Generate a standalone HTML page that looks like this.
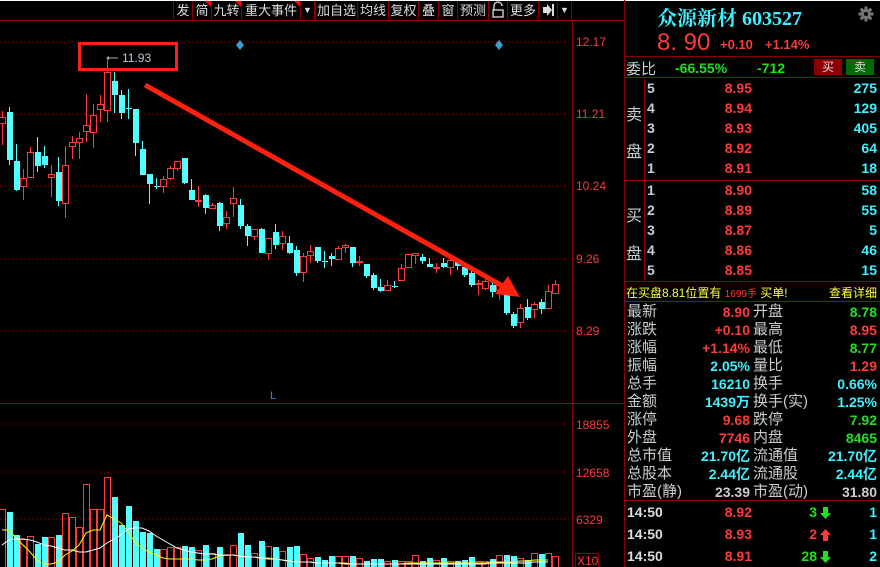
<!DOCTYPE html>
<html><head><meta charset="utf-8">
<style>
*{margin:0;padding:0;box-sizing:border-box}
body{width:880px;height:567px;background:#000;overflow:hidden;position:relative;font-family:"Liberation Sans","Noto Sans CJK SC",sans-serif;color:#ddd}
.a{position:absolute;white-space:nowrap}
.tb{position:absolute;top:1px;height:20px;border-left:1px solid #8a0000;color:#ddd;font-size:13px;line-height:19px;text-align:center;overflow:hidden}
.tri{position:absolute;right:0;top:0;width:0;height:0;border-top:6px solid #f00;border-left:6px solid transparent}
.r{color:#ff3a3a}.c{color:#3ff0ff}.g{color:#20e020}.w{color:#ccc}.y{color:#ffff40}
.num{font-weight:bold;font-size:14px}
.st{font-size:15px;line-height:18px}
</style></head><body>
<div class="a" style="left:0;top:0;width:880px;height:1px;background:#fff"></div>
<div class="tb" style="left:173px;width:19px">发</div>
<div class="tb" style="left:192px;width:19px">简<span class="tri"></span></div>
<div class="tb" style="left:211px;width:30px">九转<span class="tri"></span></div>
<div class="tb" style="left:241px;width:59px">重大事件<span class="tri"></span></div>
<div class="tb" style="left:300px;width:15px;border-right:1px solid #8a0000;font-size:9px">▼</div>
<div class="tb" style="left:315px;width:42px">加自选</div>
<div class="tb" style="left:357px;width:31px">均线</div>
<div class="tb" style="left:388px;width:30px">复权</div>
<div class="tb" style="left:418px;width:20px">叠</div>
<div class="tb" style="left:438px;width:19px">窗</div>
<div class="tb" style="left:457px;width:31px">预测</div>
<div class="tb" style="left:488px;width:19px">
<svg width="16" height="18" viewBox="0 0 16 18"><path d="M4 9V5a4 4 0 0 1 8 0" fill="none" stroke="#ddd" stroke-width="1.3"/><rect x="3" y="9" width="10" height="7" fill="none" stroke="#ddd" stroke-width="1.3"/></svg></div>
<div class="tb" style="left:507px;width:31px">更多</div>
<div class="tb" style="left:538px;width:19px"><svg width="14" height="18" viewBox="0 0 14 18"><path d="M2 6h4V3l5 6-5 6v-3H2z" fill="#ddd"/><rect x="11" y="3" width="2" height="12" fill="#ddd"/></svg></div>
<div class="tb" style="left:557px;width:15px;border-right:1px solid #8a0000;font-size:9px">▼</div>
<div class="a" style="left:0;top:20px;width:625px;height:1px;background:#8a0000"></div>

<svg class="a" style="left:0;top:0" width="625" height="567">
<g stroke="#9a0000" stroke-dasharray="1,3" stroke-width="1">
<line x1="0" y1="42" x2="572" y2="42"/><line x1="0" y1="114" x2="572" y2="114"/>
<line x1="0" y1="186" x2="572" y2="186"/><line x1="0" y1="259" x2="572" y2="259"/>
<line x1="0" y1="331" x2="572" y2="331"/>
<line x1="0" y1="424" x2="572" y2="424"/><line x1="0" y1="472" x2="572" y2="472"/>
<line x1="0" y1="519" x2="572" y2="519"/>
</g>
<line x1="572.5" y1="20" x2="572.5" y2="567" stroke="#8a0000"/>
<line x1="0" y1="403.5" x2="625" y2="403.5" stroke="#8a0000"/>
<line x1="624.5" y1="0" x2="624.5" y2="567" stroke="#8a0000"/>
<g fill="#ff3a3a" font-size="12" font-family="Liberation Sans,sans-serif">
<text x="576" y="46">12.17</text><text x="576" y="118">11.21</text><text x="576" y="190">10.24</text>
<text x="576" y="263">9.26</text><text x="576" y="335">8.29</text>
<text x="576" y="429">18855</text><text x="576" y="477">12658</text><text x="576" y="524">6329</text>
</g>
<rect x="575.5" y="553.5" width="23" height="14" fill="none" stroke="#8a0000"/>
<text x="577" y="565" fill="#ff3a3a" font-size="12" font-family="Liberation Sans,sans-serif">X10</text>
<g id="cd"></g>
<g id="vol"></g>
<polyline id="ma1" fill="none" stroke="#ffff00" stroke-width="1"/>
<polyline id="ma2" fill="none" stroke="#ffffff" stroke-width="1"/>
<path d="M240 40l4 5-4 5-4-5z" fill="#3a9ed0"/>
<path d="M499 40l4 5-4 5-4-5z" fill="#3a9ed0"/>
<text x="270" y="399" fill="#3a7fff" font-size="11" font-family="Liberation Sans,sans-serif">L</text>
<rect x="79.5" y="43.5" width="97" height="26" fill="none" stroke="#ff2010" stroke-width="3"/>
<line x1="108" y1="58" x2="118" y2="58" stroke="#aaa"/><path d="M106 58l3-2v4z" fill="#aaa"/>
<text x="122" y="62" fill="#b8c8d8" font-size="12" font-family="Liberation Sans,sans-serif">11.93</text>
<line x1="145" y1="85" x2="508" y2="289" stroke="#ff2010" stroke-width="5"/>
<path d="M520 297L495 294L508 276Z" fill="#ff2010"/>
</svg>

<div class="a c" style="left:657px;top:2px;font-size:20px;font-weight:bold;font-family:'Liberation Serif','Noto Serif CJK SC',serif">众源新材 603527</div>
<svg class="a" style="left:858px;top:6px" width="16" height="16" viewBox="0 0 16 16"><g fill="#777"><circle cx="8" cy="8" r="5"/><rect x="6.5" y="0.5" width="3" height="15"/><rect x="0.5" y="6.5" width="15" height="3"/><rect x="6.5" y="0.5" width="3" height="15" transform="rotate(45 8 8)"/><rect x="6.5" y="0.5" width="3" height="15" transform="rotate(-45 8 8)"/></g><circle cx="8" cy="8" r="2" fill="#000"/></svg>
<div class="a r" style="left:657px;top:29px;font-size:24px;font-family:'Liberation Sans',sans-serif">8. 90</div>
<div class="a r num" style="left:720px;top:37px;font-size:13px">+0.10</div>
<div class="a r num" style="left:765px;top:37px;font-size:13px">+1.14%</div>
<div class="a" style="left:625px;top:56px;width:255px;height:1px;background:#8a0000"></div>
<div class="a w" style="left:626px;top:58px;font-size:15px">委比</div>
<div class="a g num" style="left:675px;top:60px">-66.55%</div>
<div class="a g num" style="left:757px;top:60px">-712</div>
<div class="a" style="left:814px;top:59px;width:28px;height:16px;background:#8b0000;color:#ddd;font-size:12px;text-align:center;line-height:16px">买</div>
<div class="a" style="left:846px;top:59px;width:28px;height:16px;background:#006a00;color:#ddd;font-size:12px;text-align:center;line-height:16px">卖</div>
<div class="a" style="left:625px;top:77px;width:255px;height:1px;background:#8a0000"></div>
<div class="a" style="left:644px;top:77px;width:1px;height:205px;background:#8a0000"></div>
<div class="a" style="left:625px;top:180px;width:255px;height:1px;background:#8a0000"></div>
<div class="a" style="left:625px;top:281px;width:255px;height:1px;background:#8a0000"></div>
<div class="a w" style="left:626px;top:101px;font-size:16px">卖</div>
<div class="a w" style="left:626px;top:138px;font-size:16px">盘</div>
<div class="a w" style="left:626px;top:202px;font-size:16px">买</div>
<div class="a w" style="left:626px;top:240px;font-size:16px">盘</div>
<div id="ob"></div>
<div class="a y" style="left:626px;top:284px;font-size:12px">在买盘8.81位置有 <span class="r" style="font-size:10px">1699手</span> 买单!</div>
<div class="a y" style="left:829px;top:284px;font-size:12px">查看详细</div>
<div class="a" style="left:625px;top:301px;width:255px;height:1px;background:#8a0000"></div>
<div id="stats"></div>
<div class="a" style="left:625px;top:500px;width:255px;height:1px;background:#8a0000"></div>
<div id="ticks"></div>

<script>
var ns="http://www.w3.org/2000/svg";
function el(t,a,p){var e=document.createElementNS(ns,t);for(var k in a)e.setAttribute(k,a[k]);p.appendChild(e);return e;}
var C=[[117,123,111,145,1],[112,160,107,165,0],[161,190,144,191,0],[178,186,169,200,1],[152,177,147,177,1],[152,166,137,172,0],[156,165,146,168,0],[174,177,165,197,1],[172,201,157,206,0],[165,203,146,218,1],
[142,146,136,159,1],[138,142,132,159,1],[125,131,94,142,1],[115,132,104,148,1],[104,109,95,122,1],[72,110,59,122,1],[81,95,72,113,0],[95,113,90,119,0],[108,109,89,119,0],[109,143,109,156,0],
[149,175,141,175,0],[174,184,174,204,0],[186,187,178,189,0],[179,186,176,193,1],[168,178,166,180,1],[161,168,161,171,1],[158,183,158,184,0],[190,200,179,200,0],[200,201,186,207,1],[195,208,194,214,0],
[205,208,203,209,1],[203,226,202,231,0],[217,223,211,229,1],[198,203,187,217,1],[205,226,199,229,0],[226,236,224,246,0],[229,236,229,240,1],[229,253,228,253,0],[238,253,238,260,1],[232,245,224,249,0],
[236,243,231,250,1],[243,253,236,254,0],[250,273,246,276,0],[256,272,253,282,1],[251,255,245,263,1],[247,261,247,263,0],[261,262,251,268,0],[256,259,253,266,0],[248,259,246,260,1],[245,247,244,253,1],
[247,263,247,267,0],[261,262,256,266,1],[264,276,264,278,0],[275,288,273,290,0],[287,291,279,292,0],[285,290,280,290,1],[286,287,281,288,0],[268,280,264,280,1],[254,267,254,267,1],[253,255,253,264,1],
[257,261,254,264,0],[264,267,258,267,0],[267,268,263,273,1],[263,267,258,268,0],[260,267,258,275,1],[262,266,258,270,0],[267,275,262,277,0],[273,285,270,287,0],[283,284,280,295,1],[281,288,278,290,1],
[285,292,282,297,0],[285,290,283,300,1],[295,313,293,315,0],[314,326,312,328,0],[308,322,304,328,1],[307,318,299,320,0],[304,309,302,318,1],[302,309,299,314,0],[291,308,285,308,1],[284,293,280,294,1]];
var V=[509,512,535,539,536,544,537,537,535,513,517,527,484,509,509,477,497,525,506,521,532,533,549,549,547,547,546,547,550,545,553,547,555,545,533,545,553,541,546,547,551,547,546,554,558,557,560,556,556,556,556,558,561,559,559,561,560,561,561,555,561,558,560,558,561,561,560,557,561,561,559,555,555,556,558,560,553,554,553];
var g=document.getElementById('cd'),vg=document.getElementById('vol');
for(var i=0;i<C.length;i++){var c=C[i],x=2+7*i,col=c[4]?'#ff3a3a':'#54ffff';
el('line',{x1:x+.5,x2:x+.5,y1:c[2],y2:c[3],stroke:col},g);
var h=Math.max(1,c[1]-c[0]);
if(c[4])el('rect',{x:x-2.5,y:c[0]+.5,width:6,height:h,fill:'#000',stroke:col},g);
else el('rect',{x:x-2,y:c[0],width:6,height:h,fill:col},g);
var v=V[i]||556;
if(c[4])el('rect',{x:x-2.5,y:v+.5,width:6,height:567-v,fill:'none',stroke:col},vg);
else el('rect',{x:x-2,y:v,width:6,height:567-v,fill:col},vg);}
function ma(yArr){var s='';for(var i=0;i<yArr.length;i++)s+=(2+7*i)+','+yArr[i]+' ';return s;}
var y1=[530,530,538,545,552,560,564,564,562,555,551,545,533,530,530,515,519,523,532,542,548,552,555,558,559,559,559,559,560,560,559,556,555,555,556,557,557,558,558,559,560,561,562,562,562,563,563,563,563,563,564,564,564,564,564,564,564,564,563,563,563,563,563,563,563,563,563,563,563,563,562,562,562,562,561,561,560,560,560];
var y2=[545,540,539,539,540,542,545,546,548,550,550,552,552,550,548,543,539,535,529,528,528,531,536,540,544,548,550,552,553,554,554,555,555,555,556,557,557,558,559,559,560,561,562,562,562,563,563,563,563,564,564,564,564,564,564,564,564,564,564,564,564,564,564,564,564,564,564,564,564,564,563,563,563,563,563,563,562,562,562];
document.getElementById('ma1').setAttribute('points',ma(y1));
document.getElementById('ma2').setAttribute('points',ma(y2));
var ob=[['5','8.95','275'],['4','8.94','129'],['3','8.93','405'],['2','8.92','64'],['1','8.91','18'],['1','8.90','58'],['2','8.89','55'],['3','8.87','5'],['4','8.86','46'],['5','8.85','15']];
var ys=[80,100,120,140,160,182,202,222,242,262],h='';
for(var i=0;i<10;i++){h+='<div class="a w num" style="left:647px;top:'+ys[i]+'px">'+ob[i][0]+'</div><div class="a r num" style="left:700px;width:52px;text-align:right;top:'+ys[i]+'px">'+ob[i][1]+'</div><div class="a c num" style="left:820px;width:57px;text-align:right;top:'+ys[i]+'px">'+ob[i][2]+'</div>';}
document.getElementById('ob').innerHTML=h;
var S=[['最新','8.90','r','开盘','8.78','g'],['涨跌','+0.10','r','最高','8.95','r'],['涨幅','+1.14%','r','最低','8.77','g'],['振幅','2.05%','c','量比','1.29','r'],['总手','16210','c','换手','0.66%','c'],['金额','1439万','c','换手(实)','1.25%','c'],['涨停','9.68','r','跌停','7.92','g'],['外盘','7746','r','内盘','8465','g'],['总市值','21.70亿','c','流通值','21.70亿','c'],['总股本','2.44亿','c','流通股','2.44亿','c'],['市盈(静)','23.39','w','市盈(动)','31.80','w']];
h='';for(var i=0;i<S.length;i++){var t=303+i*18;var s=S[i];
h+='<div class="a w st" style="left:627px;top:'+t+'px">'+s[0]+'</div><div class="a st num '+s[2]+'" style="left:680px;width:70px;text-align:right;top:'+t+'px;font-size:14px">'+s[1]+'</div><div class="a w st" style="left:753px;top:'+t+'px">'+s[3]+'</div><div class="a st num '+s[5]+'" style="left:800px;width:77px;text-align:right;top:'+t+'px;font-size:14px">'+s[4]+'</div>';}
document.getElementById('stats').innerHTML=h;
var T=[['8.92','3','g','d','1'],['8.93','2','r','u','1'],['8.91','28','g','d','2']];
h='';for(var i=0;i<3;i++){var t=504+i*22;var k=T[i];
var arr=k[3]=='d'?'<svg class="a" style="left:820px;top:'+(t+3)+'px" width="11" height="12"><path d="M3 0h5v6h3l-5.5 6L0 6h3z" fill="#20e020"/></svg>':'<svg class="a" style="left:820px;top:'+(t+3)+'px" width="11" height="12"><path d="M3 12h5V6h3L5.5 0 0 6h3z" fill="#ff3a3a"/></svg>';
h+='<div class="a num" style="left:627px;top:'+t+'px;color:#ddd">14:50</div><div class="a r num" style="left:700px;width:52px;text-align:right;top:'+t+'px">'+k[0]+'</div><div class="a num '+k[2]+'" style="left:780px;width:37px;text-align:right;top:'+t+'px">'+k[1]+'</div>'+arr+'<div class="a c num" style="left:850px;width:27px;text-align:right;top:'+t+'px">'+k[4]+'</div>';}
document.getElementById('ticks').innerHTML=h;
</script>
</body></html>
